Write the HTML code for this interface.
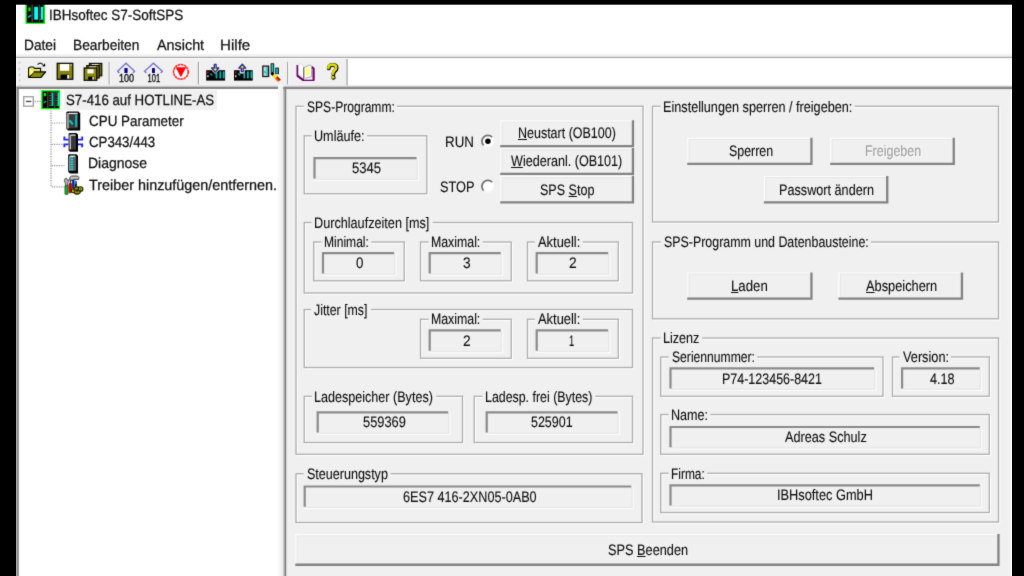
<!DOCTYPE html>
<html><head><meta charset="utf-8"><title>IBHsoftec S7-SoftSPS</title>
<style>
html,body{margin:0;padding:0;background:#000;}
body{width:1024px;height:576px;overflow:hidden;position:relative;font-family:"Liberation Sans",sans-serif;}
#clip{position:absolute;left:16px;top:0;width:996px;height:576px;overflow:hidden;}
#content{position:absolute;left:-16px;top:0;width:1024px;height:600px;filter:url(#soft);}
#win{position:absolute;left:0;top:0;width:1024px;height:600px;background:#fff;}
#topbar{position:absolute;left:0;top:0;width:1024px;height:4.7px;}
.a{position:absolute;}
.t{position:absolute;white-space:nowrap;line-height:20px;height:20px;text-rendering:geometricPrecision;transform-origin:0 0;color:#0c0c0c;-webkit-text-stroke:0.1px #0c0c0c;}
.t.ui{color:#101010;-webkit-text-stroke:0.25px #101010;}
.t.dis{color:#a2a2a2;-webkit-text-stroke:0.2px #a2a2a2;text-shadow:1.2px 1.2px 0 #fff;}
.t u{text-decoration:underline;text-underline-offset:1px;text-decoration-thickness:1px;}
svg{position:absolute;left:0;top:0;}
</style></head><body>
<svg width="0" height="0" style="position:absolute"><defs>
<filter id="soft" x="0" y="0" width="100%" height="100%" color-interpolation-filters="sRGB">
<feConvolveMatrix order="3" kernelMatrix="0.0121 0.0858 0.0121 0.0858 0.6084 0.0858 0.0121 0.0858 0.0121" divisor="1" edgeMode="duplicate" preserveAlpha="true"/>
</filter></defs></svg>
<div id="clip"><div id="content">
<div id="win"></div>
<!-- toolbar background -->
<div class="a" style="left:0px;top:58px;width:347px;height:29px;background:#f0f0f0"></div>
<!-- right pane background -->
<div class="a" style="left:278px;top:87px;width:746px;height:513px;background:#f0f0f0"></div>
<!-- tree selection -->
<div class="a" style="left:64px;top:90px;width:153px;height:20px;background:#f0f0f0"></div>
<svg width="1024" height="600" viewBox="0 0 1024 600">
<!-- menu separator -->
<rect x="0" y="54.2" width="1024" height="2.7" fill="#f1f1f1"/>
<rect x="0" y="56.8" width="1024" height="1.25" fill="#a8a8a8"/>
<rect x="0" y="58" width="347" height="1.3" fill="#fbfbfb"/>
<!-- toolbar right edge -->
<rect x="346.3" y="59" width="1.5" height="27.8" fill="#b2b2b2"/>
<!-- toolbar bottom highlight -->
<rect x="0" y="85" width="347" height="1.8" fill="#f8f8f8"/>
<!-- tree borders -->
<rect x="0" y="85.7" width="278" height="1.4" fill="#c6c6c6"/>
<rect x="0" y="87.0" width="278" height="2.0" fill="#868686"/>
<rect x="10" y="86.8" width="7.3" height="520" fill="#a8a8a8"/>
<rect x="17.2" y="86.8" width="1.55" height="520" fill="#7a7a7a"/>
<!-- right pane borders -->
<rect x="283.3" y="85.7" width="740" height="1.4" fill="#c6c6c6"/>
<rect x="283.3" y="87.1" width="1.2" height="520" fill="#b6b6b6"/>
<rect x="283.3" y="87.1" width="740" height="2.0" fill="#848484"/>
<rect x="284.4" y="87.1" width="1.9" height="520" fill="#848484"/>
<rect x="277.6" y="89" width="2.6" height="520" fill="#f8f8f8"/>
<rect x="1010.8" y="89" width="1.2" height="520" fill="#fff"/>
<rect x="297.20" y="107.45" width="347.00" height="348.00" fill="none" stroke="#fff" stroke-width="1.1"/>
<rect x="296.00" y="106.25" width="347.00" height="348.00" fill="none" stroke="#adadad" stroke-width="1.3"/>
<rect x="305.45" y="136.95" width="122.50" height="58.00" fill="none" stroke="#fff" stroke-width="1.1"/>
<rect x="304.25" y="135.75" width="122.50" height="58.00" fill="none" stroke="#adadad" stroke-width="1.3"/>
<rect x="305.45" y="223.70" width="328.25" height="70.50" fill="none" stroke="#fff" stroke-width="1.1"/>
<rect x="304.25" y="222.50" width="328.25" height="70.50" fill="none" stroke="#adadad" stroke-width="1.3"/>
<rect x="314.95" y="243.20" width="90.50" height="38.75" fill="none" stroke="#fff" stroke-width="1.1"/>
<rect x="313.75" y="242.00" width="90.50" height="38.75" fill="none" stroke="#adadad" stroke-width="1.3"/>
<rect x="421.70" y="243.20" width="90.75" height="38.75" fill="none" stroke="#fff" stroke-width="1.1"/>
<rect x="420.50" y="242.00" width="90.75" height="38.75" fill="none" stroke="#adadad" stroke-width="1.3"/>
<rect x="528.70" y="243.20" width="90.75" height="38.75" fill="none" stroke="#fff" stroke-width="1.1"/>
<rect x="527.50" y="242.00" width="90.75" height="38.75" fill="none" stroke="#adadad" stroke-width="1.3"/>
<rect x="305.45" y="310.70" width="328.25" height="58.00" fill="none" stroke="#fff" stroke-width="1.1"/>
<rect x="304.25" y="309.50" width="328.25" height="58.00" fill="none" stroke="#adadad" stroke-width="1.3"/>
<rect x="421.70" y="320.45" width="90.75" height="39.00" fill="none" stroke="#fff" stroke-width="1.1"/>
<rect x="420.50" y="319.25" width="90.75" height="39.00" fill="none" stroke="#adadad" stroke-width="1.3"/>
<rect x="528.70" y="320.45" width="90.75" height="39.00" fill="none" stroke="#fff" stroke-width="1.1"/>
<rect x="527.50" y="319.25" width="90.75" height="39.00" fill="none" stroke="#adadad" stroke-width="1.3"/>
<rect x="305.45" y="397.45" width="158.25" height="46.25" fill="none" stroke="#fff" stroke-width="1.1"/>
<rect x="304.25" y="396.25" width="158.25" height="46.25" fill="none" stroke="#adadad" stroke-width="1.3"/>
<rect x="475.45" y="397.45" width="158.25" height="46.25" fill="none" stroke="#fff" stroke-width="1.1"/>
<rect x="474.25" y="396.25" width="158.25" height="46.25" fill="none" stroke="#adadad" stroke-width="1.3"/>
<rect x="297.20" y="474.95" width="346.00" height="48.75" fill="none" stroke="#fff" stroke-width="1.1"/>
<rect x="296.00" y="473.75" width="346.00" height="48.75" fill="none" stroke="#adadad" stroke-width="1.3"/>
<rect x="653.70" y="107.45" width="346.00" height="115.75" fill="none" stroke="#fff" stroke-width="1.1"/>
<rect x="652.50" y="106.25" width="346.00" height="115.75" fill="none" stroke="#adadad" stroke-width="1.3"/>
<rect x="653.70" y="243.20" width="346.00" height="76.75" fill="none" stroke="#fff" stroke-width="1.1"/>
<rect x="652.50" y="242.00" width="346.00" height="76.75" fill="none" stroke="#adadad" stroke-width="1.3"/>
<rect x="653.70" y="339.20" width="346.00" height="184.00" fill="none" stroke="#fff" stroke-width="1.1"/>
<rect x="652.50" y="338.00" width="346.00" height="184.00" fill="none" stroke="#adadad" stroke-width="1.3"/>
<rect x="661.95" y="358.20" width="222.25" height="39.25" fill="none" stroke="#fff" stroke-width="1.1"/>
<rect x="660.75" y="357.00" width="222.25" height="39.25" fill="none" stroke="#adadad" stroke-width="1.3"/>
<rect x="893.70" y="358.20" width="96.75" height="39.25" fill="none" stroke="#fff" stroke-width="1.1"/>
<rect x="892.50" y="357.00" width="96.75" height="39.25" fill="none" stroke="#adadad" stroke-width="1.3"/>
<rect x="661.95" y="415.70" width="328.50" height="39.75" fill="none" stroke="#fff" stroke-width="1.1"/>
<rect x="660.75" y="414.50" width="328.50" height="39.75" fill="none" stroke="#adadad" stroke-width="1.3"/>
<rect x="661.95" y="474.45" width="328.50" height="39.25" fill="none" stroke="#fff" stroke-width="1.1"/>
<rect x="660.75" y="473.25" width="328.50" height="39.25" fill="none" stroke="#adadad" stroke-width="1.3"/>
<rect x="303.55" y="104.00" width="93.45" height="8" fill="#f0f0f0"/>
<rect x="311.70" y="133.00" width="55.30" height="8" fill="#f0f0f0"/>
<rect x="311.70" y="220.00" width="120.95" height="8" fill="#f0f0f0"/>
<rect x="321.70" y="239.00" width="49.70" height="8" fill="#f0f0f0"/>
<rect x="428.55" y="239.00" width="54.10" height="8" fill="#f0f0f0"/>
<rect x="534.80" y="239.00" width="47.85" height="8" fill="#f0f0f0"/>
<rect x="311.05" y="307.00" width="59.85" height="8" fill="#f0f0f0"/>
<rect x="428.55" y="316.00" width="54.10" height="8" fill="#f0f0f0"/>
<rect x="534.80" y="316.00" width="47.85" height="8" fill="#f0f0f0"/>
<rect x="311.80" y="394.00" width="124.60" height="8" fill="#f0f0f0"/>
<rect x="482.30" y="394.00" width="113.10" height="8" fill="#f0f0f0"/>
<rect x="303.55" y="471.00" width="87.10" height="8" fill="#f0f0f0"/>
<rect x="660.55" y="104.00" width="194.10" height="8" fill="#f0f0f0"/>
<rect x="660.55" y="239.00" width="210.35" height="8" fill="#f0f0f0"/>
<rect x="660.55" y="335.00" width="41.60" height="8" fill="#f0f0f0"/>
<rect x="668.55" y="354.00" width="88.60" height="8" fill="#f0f0f0"/>
<rect x="899.30" y="354.00" width="51.60" height="8" fill="#f0f0f0"/>
<rect x="668.55" y="412.00" width="41.85" height="8" fill="#f0f0f0"/>
<rect x="668.55" y="471.00" width="38.60" height="8" fill="#f0f0f0"/>
<path d="M313.40 180.40H418.40V157.10" fill="none" stroke="#fbfbfb" stroke-width="1.2"/>
<path d="M314.60 179.10H417.10V158.30" fill="none" stroke="#e7e7e7" stroke-width="1.3"/>
<path d="M314.50 178.50V158.20H416.50" fill="none" stroke="#8a8a8a" stroke-width="2.2"/>
<path d="M321.90 275.40H396.00V252.10" fill="none" stroke="#fbfbfb" stroke-width="1.2"/>
<path d="M323.10 274.10H394.70V253.30" fill="none" stroke="#e7e7e7" stroke-width="1.3"/>
<path d="M323.00 273.50V253.20H394.10" fill="none" stroke="#8a8a8a" stroke-width="2.2"/>
<path d="M428.60 275.40H502.60V252.10" fill="none" stroke="#fbfbfb" stroke-width="1.2"/>
<path d="M429.80 274.10H501.30V253.30" fill="none" stroke="#e7e7e7" stroke-width="1.3"/>
<path d="M429.70 273.50V253.20H500.70" fill="none" stroke="#8a8a8a" stroke-width="2.2"/>
<path d="M535.60 275.40H610.00V252.10" fill="none" stroke="#fbfbfb" stroke-width="1.2"/>
<path d="M536.80 274.10H608.70V253.30" fill="none" stroke="#e7e7e7" stroke-width="1.3"/>
<path d="M536.70 273.50V253.20H608.10" fill="none" stroke="#8a8a8a" stroke-width="2.2"/>
<path d="M428.60 352.60H502.60V329.30" fill="none" stroke="#fbfbfb" stroke-width="1.2"/>
<path d="M429.80 351.30H501.30V330.50" fill="none" stroke="#e7e7e7" stroke-width="1.3"/>
<path d="M429.70 350.70V330.40H500.70" fill="none" stroke="#8a8a8a" stroke-width="2.2"/>
<path d="M535.60 352.60H610.00V329.30" fill="none" stroke="#fbfbfb" stroke-width="1.2"/>
<path d="M536.80 351.30H608.70V330.50" fill="none" stroke="#e7e7e7" stroke-width="1.3"/>
<path d="M536.70 350.70V330.40H608.10" fill="none" stroke="#8a8a8a" stroke-width="2.2"/>
<path d="M316.60 434.50H450.00V411.20" fill="none" stroke="#fbfbfb" stroke-width="1.2"/>
<path d="M317.80 433.20H448.70V412.40" fill="none" stroke="#e7e7e7" stroke-width="1.3"/>
<path d="M317.70 432.60V412.30H448.10" fill="none" stroke="#8a8a8a" stroke-width="2.2"/>
<path d="M485.60 434.50H619.40V411.20" fill="none" stroke="#fbfbfb" stroke-width="1.2"/>
<path d="M486.80 433.20H618.10V412.40" fill="none" stroke="#e7e7e7" stroke-width="1.3"/>
<path d="M486.70 432.60V412.30H617.50" fill="none" stroke="#8a8a8a" stroke-width="2.2"/>
<path d="M303.60 508.70H633.20V485.40" fill="none" stroke="#fbfbfb" stroke-width="1.2"/>
<path d="M304.80 507.40H631.90V486.60" fill="none" stroke="#e7e7e7" stroke-width="1.3"/>
<path d="M304.70 506.80V486.50H631.30" fill="none" stroke="#8a8a8a" stroke-width="2.2"/>
<path d="M669.40 390.50H876.00V367.20" fill="none" stroke="#fbfbfb" stroke-width="1.2"/>
<path d="M670.60 389.20H874.70V368.40" fill="none" stroke="#e7e7e7" stroke-width="1.3"/>
<path d="M670.50 388.60V368.30H874.10" fill="none" stroke="#8a8a8a" stroke-width="2.2"/>
<path d="M901.00 390.50H981.70V367.20" fill="none" stroke="#fbfbfb" stroke-width="1.2"/>
<path d="M902.20 389.20H980.40V368.40" fill="none" stroke="#e7e7e7" stroke-width="1.3"/>
<path d="M902.10 388.60V368.30H979.80" fill="none" stroke="#8a8a8a" stroke-width="2.2"/>
<path d="M669.40 449.20H981.70V425.90" fill="none" stroke="#fbfbfb" stroke-width="1.2"/>
<path d="M670.60 447.90H980.40V427.10" fill="none" stroke="#e7e7e7" stroke-width="1.3"/>
<path d="M670.50 447.30V427.00H979.80" fill="none" stroke="#8a8a8a" stroke-width="2.2"/>
<path d="M669.40 507.50H981.70V484.20" fill="none" stroke="#fbfbfb" stroke-width="1.2"/>
<path d="M670.60 506.20H980.40V485.40" fill="none" stroke="#e7e7e7" stroke-width="1.3"/>
<path d="M670.50 505.60V485.30H979.80" fill="none" stroke="#8a8a8a" stroke-width="2.2"/>
<rect x="500.20" y="120.20" width="133.90" height="27.10" fill="#f0f0f0"/>
<path d="M502.00 145.00V122.00H631.80" fill="none" stroke="#e7e7e7" stroke-width="1.2"/>
<path d="M500.80 146.10V120.80H632.90" fill="none" stroke="#fcfcfc" stroke-width="1.2"/>
<path d="M500.20 146.15H632.95V120.20" fill="none" stroke="#828282" stroke-width="2.3"/>
<rect x="500.20" y="148.00" width="133.90" height="27.10" fill="#f0f0f0"/>
<path d="M502.00 172.80V149.80H631.80" fill="none" stroke="#e7e7e7" stroke-width="1.2"/>
<path d="M500.80 173.90V148.60H632.90" fill="none" stroke="#fcfcfc" stroke-width="1.2"/>
<path d="M500.20 173.95H632.95V148.00" fill="none" stroke="#828282" stroke-width="2.3"/>
<rect x="500.20" y="175.80" width="133.90" height="27.70" fill="#f0f0f0"/>
<path d="M502.00 201.20V177.60H631.80" fill="none" stroke="#e7e7e7" stroke-width="1.2"/>
<path d="M500.80 202.30V176.40H632.90" fill="none" stroke="#fcfcfc" stroke-width="1.2"/>
<path d="M500.20 202.35H632.95V175.80" fill="none" stroke="#828282" stroke-width="2.3"/>
<rect x="687.20" y="137.70" width="125.40" height="27.40" fill="#f0f0f0"/>
<path d="M689.00 162.80V139.50H810.30" fill="none" stroke="#e7e7e7" stroke-width="1.2"/>
<path d="M687.80 163.90V138.30H811.40" fill="none" stroke="#fcfcfc" stroke-width="1.2"/>
<path d="M687.20 163.95H811.45V137.70" fill="none" stroke="#828282" stroke-width="2.3"/>
<rect x="830.20" y="137.70" width="124.70" height="27.40" fill="#f0f0f0"/>
<path d="M832.00 162.80V139.50H952.60" fill="none" stroke="#e7e7e7" stroke-width="1.2"/>
<path d="M830.80 163.90V138.30H953.70" fill="none" stroke="#fcfcfc" stroke-width="1.2"/>
<path d="M830.20 163.95H953.75V137.70" fill="none" stroke="#828282" stroke-width="2.3"/>
<rect x="763.90" y="175.90" width="124.50" height="27.60" fill="#f0f0f0"/>
<path d="M765.70 201.20V177.70H886.10" fill="none" stroke="#e7e7e7" stroke-width="1.2"/>
<path d="M764.50 202.30V176.50H887.20" fill="none" stroke="#fcfcfc" stroke-width="1.2"/>
<path d="M763.90 202.35H887.25V175.90" fill="none" stroke="#828282" stroke-width="2.3"/>
<rect x="687.20" y="272.40" width="125.40" height="27.30" fill="#f0f0f0"/>
<path d="M689.00 297.40V274.20H810.30" fill="none" stroke="#e7e7e7" stroke-width="1.2"/>
<path d="M687.80 298.50V273.00H811.40" fill="none" stroke="#fcfcfc" stroke-width="1.2"/>
<path d="M687.20 298.55H811.45V272.40" fill="none" stroke="#828282" stroke-width="2.3"/>
<rect x="838.40" y="272.40" width="124.70" height="27.30" fill="#f0f0f0"/>
<path d="M840.20 297.40V274.20H960.80" fill="none" stroke="#e7e7e7" stroke-width="1.2"/>
<path d="M839.00 298.50V273.00H961.90" fill="none" stroke="#fcfcfc" stroke-width="1.2"/>
<path d="M838.40 298.55H961.95V272.40" fill="none" stroke="#828282" stroke-width="2.3"/>
<rect x="295.30" y="534.10" width="704.30" height="31.80" fill="#f0f0f0"/>
<path d="M297.10 563.60V535.90H997.30" fill="none" stroke="#e7e7e7" stroke-width="1.2"/>
<path d="M295.90 564.70V534.70H998.40" fill="none" stroke="#fcfcfc" stroke-width="1.2"/>
<path d="M295.30 564.75H998.45V534.10" fill="none" stroke="#828282" stroke-width="2.3"/>
<circle cx="487.9" cy="141.3" r="5.2" fill="#fff"/>
<path d="M492.10 137.10A5.9 5.9 0 0 0 483.70 145.50" fill="none" stroke="#6e6e6e" stroke-width="1.7"/>
<path d="M492.10 137.10A5.9 5.9 0 0 1 483.70 145.50" fill="none" stroke="#f8f8f8" stroke-width="1.2"/>
<circle cx="487.9" cy="141.3" r="2.75" fill="#000"/>
<circle cx="487.9" cy="186.4" r="5.2" fill="#fff"/>
<path d="M492.10 182.20A5.9 5.9 0 0 0 483.70 190.60" fill="none" stroke="#6e6e6e" stroke-width="1.7"/>
<path d="M492.10 182.20A5.9 5.9 0 0 1 483.70 190.60" fill="none" stroke="#f8f8f8" stroke-width="1.2"/>
<!-- ===== app icon (title bar) ===== -->
<g>
<rect x="25.4" y="3" width="19.7" height="20.8" fill="#00f000"/>
<rect x="26.9" y="4" width="16.6" height="18.6" fill="#000"/>
<rect x="28.3" y="7.4" width="2.3" height="3.8" fill="#00f000"/>
<path d="M28.2 17.4L31.2 15.2" stroke="#00c8c8" stroke-width="1.5" fill="none"/>
<rect x="31.3" y="4" width="1.9" height="18.6" fill="#3c3c3c"/>
<rect x="34.2" y="6.8" width="3.8" height="12.9" fill="#00ffff"/>
<rect x="38.6" y="4" width="1.6" height="18.6" fill="#3c3c3c"/>
<rect x="40.8" y="6.8" width="2.3" height="12.9" fill="#00ffff"/>
<rect x="32.2" y="14.2" width="1" height="1" fill="#208020"/><rect x="32.2" y="19" width="1" height="1" fill="#a02020"/>
<rect x="40" y="14.2" width="0.9" height="1" fill="#208020"/><rect x="40" y="16.4" width="0.9" height="1" fill="#a02020"/><rect x="40" y="19" width="0.9" height="1" fill="#20a020"/>
</g>
<!-- ===== toolbar gripper ===== -->
<g stroke="#c4c4c4" stroke-width="1.1" fill="none">
<path d="M18.8 63.6L20.4 61.8M18.8 69.8L20.4 68M18.8 75.6L20.4 73.8M18.8 81.5L20.4 79.7M18.8 87L20.4 85.2"/>
</g>
<!-- ===== open folder ===== -->
<g>
<path d="M28.6 77.6V68L30.4 67H33.4L34.6 68.4H40.6V72" fill="#e8e870" stroke="#000" stroke-width="1.1"/>
<path d="M28.8 77.5L34 71.9H45.6L40.8 77.5Z" fill="#8a8a10" stroke="#000" stroke-width="1.2" stroke-linejoin="round"/>
<path d="M29.6 76L29.6 68.6L34 71.9Z" fill="#ffff80"/>
<path d="M37.6 64.6Q40 61.6 43 64.6" fill="none" stroke="#202020" stroke-width="1.1"/>
<path d="M42 66.2L45.2 66.6L45 63.2Z" fill="#000"/>
</g>
<!-- ===== save ===== -->
<g>
<rect x="57.2" y="63.3" width="15.6" height="16" fill="#848410" stroke="#000" stroke-width="1.2"/>
<rect x="60" y="64" width="9.2" height="6.8" fill="#fff"/>
<rect x="60.6" y="74.6" width="9.2" height="4.2" fill="#000"/>
<rect x="67.2" y="75" width="2.2" height="3.6" fill="#fff"/>
<rect x="70.6" y="64.2" width="1.2" height="1.6" fill="#d0d0d0"/>
</g>
<!-- ===== save all ===== -->
<g>
<rect x="89.4" y="63.4" width="12.4" height="12.4" fill="#6c6c10" stroke="#000" stroke-width="1.1"/>
<rect x="92" y="64" width="6.4" height="3" fill="#e8e8e8"/>
<rect x="86.8" y="65.6" width="12.4" height="12.4" fill="#78780c" stroke="#000" stroke-width="1.1"/>
<rect x="89.4" y="66.4" width="6.6" height="3" fill="#e8e8e8"/>
<rect x="84.2" y="68" width="12.6" height="12.3" fill="#8a8a10" stroke="#000" stroke-width="1.2"/>
<rect x="87.4" y="69.2" width="6.2" height="4.2" fill="#fff"/>
<rect x="88.2" y="76.6" width="6" height="3.2" fill="#000"/>
<rect x="92.4" y="77" width="1.4" height="2.6" fill="#fff"/>
</g>
<!-- separators -->
<g>
<rect x="108.6" y="62" width="1.2" height="22.4" fill="#a4a4a4"/><rect x="109.8" y="62" width="1.1" height="22.4" fill="#fafafa"/>
<rect x="197.8" y="62" width="1.2" height="22.4" fill="#a4a4a4"/><rect x="199" y="62" width="1.1" height="22.4" fill="#fafafa"/>
<rect x="287" y="62" width="1.2" height="22.4" fill="#a4a4a4"/><rect x="288.2" y="62" width="1.1" height="22.4" fill="#fafafa"/>
</g>
<!-- ===== OB100 ===== -->
<g>
<path d="M119.4 73L117.6 71.2L126 63.2L134.6 71.2L132.8 73" fill="none" stroke="#7272c8" stroke-width="1.3"/>
<rect x="124.4" y="68" width="3.2" height="5" rx="0.6" fill="#000090"/>
<text x="119" y="81.9" font-family="Liberation Sans, sans-serif" font-size="10.2" fill="#101010" stroke="#101010" stroke-width="0.35" textLength="15" lengthAdjust="spacingAndGlyphs">100</text>
</g>
<!-- ===== OB101 ===== -->
<g>
<path d="M146.4 73L144.6 71.2L153.4 63.2L162.4 71.2L160.6 73" fill="none" stroke="#7272c8" stroke-width="1.3"/>
<rect x="152" y="68" width="2.9" height="5" rx="0.6" fill="#000090"/>
<text x="147.6" y="81.9" font-family="Liberation Sans, sans-serif" font-size="10.2" fill="#101010" stroke="#101010" stroke-width="0.35" textLength="12.6" lengthAdjust="spacingAndGlyphs">101</text>
</g>
<!-- ===== stop ===== -->
<g>
<circle cx="180.9" cy="71.8" r="7.3" fill="#fff" stroke="#ff2020" stroke-width="1.6" stroke-dasharray="2.6 0.5"/>
<path d="M175.6 67.2H186.2L180.9 77.2Z" fill="#ff0000"/>
</g>
<!-- ===== download ===== -->
<g>
<rect x="206.2" y="70.2" width="18.9" height="10.4" fill="#000"/>
<path d="M211.4 70.2L215.2 74L219 70.2Z" fill="#e0e0e0"/>
<rect x="215.6" y="72.6" width="1.8" height="5.8" fill="#00b8b8"/>
<rect x="219.4" y="71.4" width="1.8" height="7" fill="#00b8b8"/>
<rect x="222.8" y="71.4" width="1.8" height="7" fill="#00b8b8"/>
<rect x="207.2" y="71.4" width="1.5" height="2.2" fill="#e00000"/>
<rect x="207.2" y="75.2" width="1.5" height="2" fill="#d0d0d0"/>
<path d="M210.2 73.6L212.4 75.6" stroke="#00b8b8" stroke-width="1.3"/>
<path d="M214.3 64.4H216.1V68H218.8L215.2 72.2L211.6 68H214.3Z" fill="#f4f400" stroke="#2828a8" stroke-width="1.3" stroke-linejoin="round"/>
</g>
<!-- ===== upload ===== -->
<g>
<rect x="234" y="70.2" width="18.7" height="10.4" fill="#000"/>
<rect x="239.6" y="70.2" width="5.2" height="3.4" fill="#e8e8e8"/>
<rect x="243.4" y="72.8" width="1.8" height="5.6" fill="#00b8b8"/>
<rect x="247" y="71.4" width="1.8" height="7" fill="#00b8b8"/>
<rect x="250.5" y="71.4" width="1.8" height="7" fill="#00b8b8"/>
<rect x="235" y="71.4" width="1.5" height="2.2" fill="#e00000"/>
<rect x="235" y="75.2" width="1.5" height="2" fill="#d0d0d0"/>
<path d="M238 73.6L240.2 75.6" stroke="#00b8b8" stroke-width="1.3"/>
<path d="M242.3 64.2L245.8 68.2H243.2V71.6H241.4V68.2H238.8Z" fill="#f4f400" stroke="#2828a8" stroke-width="1.3" stroke-linejoin="round"/>
</g>
<!-- ===== erase ===== -->
<g>
<rect x="262.8" y="66.1" width="5.8" height="10.4" fill="#d4d4d4" stroke="#181818" stroke-width="1.3"/>
<rect x="266.4" y="67" width="1.4" height="8.8" fill="#00c0c0"/>
<path d="M263.8 71L265.8 73" stroke="#00c0c0" stroke-width="1.3"/>
<rect x="270.6" y="63.2" width="3.6" height="9.6" fill="#282828"/>
<rect x="271.7" y="64.2" width="1.4" height="8" fill="#00d8d8"/>
<rect x="275.2" y="67.6" width="3.8" height="6.6" fill="#282828"/>
<rect x="276.4" y="68.6" width="1.4" height="5" fill="#00d8d8"/>
<path d="M271.4 72.8L273.8 75.2" stroke="#000" stroke-width="3"/>
<path d="M273.4 74.8L276.8 78.2" stroke="#f4e428" stroke-width="3.6"/>
<path d="M276.2 77.6L279.4 80.8" stroke="#f06000" stroke-width="3.6"/>
<path d="M277 77L280.2 80.2" stroke="#a00000" stroke-width="1.3"/>
</g>
<!-- ===== book ===== -->
<g>
<path d="M297.6 65V75.8L303 80H313.6V68.6L311.4 66.8" fill="none" stroke="#700070" stroke-width="2.2" stroke-linejoin="round"/>
<path d="M298.4 64.4L301.4 63.6L304 67.6V78.4L298.4 74.6Z" fill="#fff" stroke="#c8c8c8" stroke-width="0.6"/>
<path d="M304 67.6L309.6 65L311.6 66.2V76.4L304 78.8Z" fill="#fff" stroke="#909090" stroke-width="0.8"/>
<path d="M303.6 67.6V79" stroke="#707070" stroke-width="1.1"/>
<path d="M305.6 68.4L309.8 66.6V74.6L305.6 76.4Z" fill="#ffff80"/>
<path d="M304 79.2H312.6" stroke="#f8f8f8" stroke-width="1"/>
</g>
<!-- ===== help ===== -->
<g>
<path d="M328.8 68.4Q328.6 65 332.6 65Q336.6 65 336.6 68Q336.6 69.8 334.6 71.2Q333.4 72.2 333.4 74.2" fill="none" stroke="#000" stroke-width="3.9" stroke-linecap="round"/>
<circle cx="333.4" cy="77.6" r="2.2" fill="#000"/>
<path d="M328.4 68Q328.2 64.6 332.2 64.6Q336.2 64.6 336.2 67.6Q336.2 69.4 334.2 70.8Q333 71.8 333 73.8" fill="none" stroke="#dcdc00" stroke-width="2.6" stroke-linecap="round"/>
<circle cx="333" cy="77.2" r="1.5" fill="#dcdc00"/>
</g>
<!-- ===== tree: expand box, dotted lines ===== -->
<g>
<rect x="23.7" y="96.7" width="9.6" height="9.5" fill="#fff" stroke="#9c9c9c" stroke-width="1.3"/>
<rect x="25.9" y="100.8" width="5.4" height="1.3" fill="#404040"/>
<g stroke="#8e8e8e" stroke-width="1.2" stroke-dasharray="1.2 1.2" fill="none">
<path d="M34.6 101.4H41.2"/>
<path d="M51 110.4V186.8"/>
<path d="M51.6 123H64.4M51.6 144.4H63.4M51.6 165.6H64.4M51.6 186.8H64.4"/>
</g>
</g>
<!-- ===== tree root icon ===== -->
<g>
<rect x="41.2" y="90.2" width="18.9" height="19.1" fill="#00f000"/>
<rect x="42.6" y="91.5" width="16.2" height="16.5" fill="#000"/>
<rect x="43.8" y="93" width="2.3" height="3.2" fill="#00f000"/>
<path d="M43.8 103L46.2 101" stroke="#00b8b8" stroke-width="1.4"/>
<rect x="47.1" y="91.5" width="1.3" height="16.5" fill="#484848"/>
<g fill="#c00000"><rect x="48.9" y="92.6" width="2.1" height="1.5"/><rect x="48.9" y="97.4" width="2.1" height="1.5"/><rect x="48.9" y="102.1" width="2.1" height="1.5"/></g>
<g fill="#00a000"><rect x="48.9" y="95" width="2.1" height="1.3"/><rect x="48.9" y="99.8" width="2.1" height="1.3"/><rect x="48.9" y="104.6" width="2.1" height="1.3"/></g>
<rect x="51.5" y="92.4" width="1.9" height="13.6" fill="#00d8d8"/>
<rect x="54.2" y="91.5" width="1.2" height="16.5" fill="#484848"/>
<g fill="#c00000"><rect x="55.6" y="94.6" width="1.7" height="1.5"/><rect x="55.6" y="97.4" width="1.7" height="1.5"/><rect x="55.6" y="102.1" width="1.7" height="1.5"/></g>
<g fill="#00a000"><rect x="55.6" y="92.4" width="1.7" height="1.2"/><rect x="55.6" y="99.8" width="1.7" height="1.3"/><rect x="55.6" y="104.6" width="1.7" height="1.3"/></g>
<rect x="57.5" y="92.4" width="1.5" height="13.6" fill="#00e8e8"/>
</g>
<!-- ===== CPU icon ===== -->
<g>
<path d="M66.4 112L67.6 111.6H78.4L80.2 113.4V130.4H68L66.4 128.8Z" fill="#000"/>
<rect x="67.4" y="113" width="10.6" height="15.4" fill="#3a3a3a"/>
<rect x="67.2" y="113" width="1.6" height="15.6" fill="#b4b4b4"/>
<rect x="68.8" y="112.8" width="8.8" height="1.3" fill="#f0f0f0"/>
<path d="M69.6 120.4L72.8 124.4" stroke="#00d0d0" stroke-width="2"/>
<rect x="75.2" y="114.9" width="1.9" height="11.9" fill="#00c8c8"/>
</g>
<!-- ===== CP icon ===== -->
<g>
<path d="M68.6 133.6L69.8 133H76.4L78 134.6V151.8H70L68.6 150.4Z" fill="#000"/>
<rect x="69.6" y="134.6" width="6.4" height="15" fill="#383838"/>
<rect x="69.5" y="134.6" width="1.5" height="14.8" fill="#c0c0c0"/>
<rect x="71" y="134.4" width="4.4" height="1.4" fill="#d8d8d8"/>
<g stroke="#2020ff" stroke-width="1.9" fill="none">
<path d="M64.4 136.6V139.6H68.6M64.4 147.2V144.4H68.6M82.2 136.6V139.6H78M82.2 147.2V144.4H78"/>
</g>
</g>
<!-- ===== Diagnose icon ===== -->
<g>
<path d="M68.2 154.8L69.4 154.2H76.4L78 155.8V173.4H70L68.2 171.8Z" fill="#000"/>
<rect x="69.4" y="155.8" width="6.8" height="15" fill="#484848"/>
<rect x="69.2" y="155.8" width="1.1" height="15" fill="#a0a0a0"/>
<rect x="70.3" y="156.2" width="3.2" height="14.2" fill="#30d0d8"/>
<rect x="70.3" y="155.6" width="5" height="1.2" fill="#e8ffff"/>
<path d="M70.3 158.4H76M70.3 160.8H76M70.3 163.2H76M70.3 165.6H76M70.3 168H76" stroke="#303838" stroke-width="0.6" fill="none"/>
<rect x="73.5" y="156.8" width="2.4" height="13.6" fill="#707070" opacity="0.6"/>
</g>
<!-- ===== Treiber icon ===== -->
<g>
<path d="M69.8 177.6L71.4 176H77.6L78.8 177.4V179.4H73.4L72.8 180.2H69.8Z" fill="#c0c0c0" stroke="#404040" stroke-width="1"/>
<path d="M64.4 180.8Q64.2 178.4 66.4 178L67.6 180.4L68.6 179.6Q69.2 182 67.6 183V186H65.4V183Q64.4 182.4 64.4 180.8Z" fill="#b0b0b0" stroke="#505050" stroke-width="0.9"/>
<rect x="64.9" y="185.6" width="3.2" height="9" rx="0.8" fill="#18a828" stroke="#0a400a" stroke-width="0.6"/>
<rect x="68.9" y="183.4" width="2.8" height="9.4" rx="0.6" fill="#e00000" stroke="#500000" stroke-width="0.6"/>
<rect x="69.8" y="179.8" width="1.4" height="4" fill="#404040"/>
<rect x="72.2" y="179.8" width="1.7" height="8.4" fill="#000090"/>
<rect x="73.9" y="180.2" width="1.6" height="6.4" fill="#00a0e8"/>
<rect x="75.5" y="181" width="1.2" height="6" fill="#202020"/>
<circle cx="77" cy="190.4" r="3.6" fill="#d4d400" stroke="#181800" stroke-width="1.3"/>
<circle cx="80.6" cy="189" r="2.3" fill="#d4d400" stroke="#181800" stroke-width="1.1"/>
<circle cx="73.2" cy="190.8" r="1.9" fill="#cccc00" stroke="#181800" stroke-width="1.1"/>
<circle cx="77" cy="190.4" r="1.2" fill="#202000"/>
<circle cx="80.6" cy="189" r="0.8" fill="#202000"/>
<path d="M75 186.4L76.4 183.8" stroke="#000" stroke-width="1.3"/>
<path d="M74.6 188.2L79.4 192.8M79.4 188L74.8 192.8M77 186.6V194.4M73 190.4H81" stroke="#282800" stroke-width="0.6" fill="none"/>
</g>

</svg>
<div class="t ui" style="left:49.09px;top:6.00px;font-size:14.8px;transform:scaleX(0.9123)">IBHsoftec S7-SoftSPS</div>
<div class="t ui" style="left:24.27px;top:36.00px;font-size:14.8px;transform:scaleX(0.9262)">Datei</div>
<div class="t ui" style="left:72.82px;top:36.00px;font-size:14.8px;transform:scaleX(0.9276)">Bearbeiten</div>
<div class="t ui" style="left:156.75px;top:36.00px;font-size:14.8px;transform:scaleX(0.9708)">Ansicht</div>
<div class="t ui" style="left:219.98px;top:36.00px;font-size:14.8px;transform:scaleX(1.0221)">Hilfe</div>
<div class="t ui" style="left:66.25px;top:91.00px;font-size:14.8px;transform:scaleX(0.8961)">S7-416 auf HOTLINE-AS</div>
<div class="t ui" style="left:89.00px;top:112.00px;font-size:14.8px;transform:scaleX(0.9067)">CPU Parameter</div>
<div class="t ui" style="left:89.00px;top:133.00px;font-size:14.8px;transform:scaleX(0.8942)">CP343/443</div>
<div class="t ui" style="left:88.05px;top:154.00px;font-size:14.8px;transform:scaleX(0.9463)">Diagnose</div>
<div class="t ui" style="left:89.25px;top:176.00px;font-size:14.8px;transform:scaleX(0.9716)">Treiber hinzufügen/entfernen.</div>
<div class="t" style="left:306.75px;top:98.00px;font-size:15.2px;transform:scaleX(0.7943)">SPS-Programm:</div>
<div class="t" style="left:314.07px;top:127.00px;font-size:15.2px;transform:scaleX(0.8317)">Umläufe:</div>
<div class="t" style="left:351.75px;top:159.00px;font-size:15.2px;transform:scaleX(0.8623)">5345</div>
<div class="t" style="left:445.12px;top:133.00px;font-size:15.2px;transform:scaleX(0.8792)">RUN</div>
<div class="t" style="left:439.75px;top:178.00px;font-size:15.2px;transform:scaleX(0.8389)">STOP</div>
<div class="t" style="left:517.68px;top:124.00px;font-size:15.2px;transform:scaleX(0.8223)"><u>N</u>eustart (OB100)</div>
<div class="t" style="left:511.25px;top:152.00px;font-size:15.2px;transform:scaleX(0.8293)"><u>W</u>iederanl. (OB101)</div>
<div class="t" style="left:539.80px;top:181.00px;font-size:15.2px;transform:scaleX(0.8249)">SPS <u>S</u>top</div>
<div class="t" style="left:314.07px;top:214.00px;font-size:15.2px;transform:scaleX(0.8334)">Durchlaufzeiten [ms]</div>
<div class="t" style="left:324.11px;top:233.00px;font-size:15.2px;transform:scaleX(0.7935)">Minimal:</div>
<div class="t" style="left:355.50px;top:254.00px;font-size:15.2px;transform:scaleX(0.8750)">0</div>
<div class="t" style="left:430.94px;top:233.00px;font-size:15.2px;transform:scaleX(0.8114)">Maximal:</div>
<div class="t" style="left:462.50px;top:254.00px;font-size:15.2px;transform:scaleX(0.9062)">3</div>
<div class="t" style="left:538.00px;top:233.00px;font-size:15.2px;transform:scaleX(0.8490)">Aktuell:</div>
<div class="t" style="left:569.25px;top:254.00px;font-size:15.2px;transform:scaleX(0.9062)">2</div>
<div class="t" style="left:314.25px;top:301.00px;font-size:15.2px;transform:scaleX(0.8118)">Jitter [ms]</div>
<div class="t" style="left:430.94px;top:310.00px;font-size:15.2px;transform:scaleX(0.8114)">Maximal:</div>
<div class="t" style="left:462.50px;top:332.00px;font-size:15.2px;transform:scaleX(0.9062)">2</div>
<div class="t" style="left:538.00px;top:310.00px;font-size:15.2px;transform:scaleX(0.8490)">Aktuell:</div>
<div class="t" style="left:569.09px;top:332.00px;font-size:15.2px;transform:scaleX(0.6143)">1</div>
<div class="t" style="left:314.17px;top:388.00px;font-size:15.2px;transform:scaleX(0.8283)">Ladespeicher (Bytes)</div>
<div class="t" style="left:362.50px;top:413.00px;font-size:15.2px;transform:scaleX(0.8461)">559369</div>
<div class="t" style="left:484.68px;top:388.00px;font-size:15.2px;transform:scaleX(0.8153)">Ladesp. frei (Bytes)</div>
<div class="t" style="left:531.25px;top:413.00px;font-size:15.2px;transform:scaleX(0.8212)">525901</div>
<div class="t" style="left:306.75px;top:465.00px;font-size:15.2px;transform:scaleX(0.8257)">Steuerungstyp</div>
<div class="t" style="left:403.00px;top:488.00px;font-size:15.2px;transform:scaleX(0.8330)">6ES7 416-2XN05-0AB0</div>
<div class="t" style="left:608.40px;top:541.00px;font-size:15.2px;transform:scaleX(0.8392)">SPS <u>B</u>eenden</div>
<div class="t" style="left:662.92px;top:98.00px;font-size:15.2px;transform:scaleX(0.8337)">Einstellungen sperren / freigeben:</div>
<div class="t" style="left:728.75px;top:142.00px;font-size:15.2px;transform:scaleX(0.8165)">Sperren</div>
<div class="t dis" style="left:864.68px;top:142.00px;font-size:15.2px;transform:scaleX(0.8216)">Freigeben</div>
<div class="t" style="left:779.17px;top:181.00px;font-size:15.2px;transform:scaleX(0.8332)">Passwort ändern</div>
<div class="t" style="left:663.75px;top:233.00px;font-size:15.2px;transform:scaleX(0.8166)">SPS-Programm und Datenbausteine:</div>
<div class="t" style="left:731.13px;top:277.00px;font-size:15.2px;transform:scaleX(0.8704)"><u>L</u>aden</div>
<div class="t" style="left:866.00px;top:277.00px;font-size:15.2px;transform:scaleX(0.8424)"><u>A</u>bspeichern</div>
<div class="t" style="left:662.92px;top:329.00px;font-size:15.2px;transform:scaleX(0.8273)">Lizenz</div>
<div class="t" style="left:671.75px;top:348.00px;font-size:15.2px;transform:scaleX(0.7992)">Seriennummer:</div>
<div class="t" style="left:722.18px;top:370.00px;font-size:15.2px;transform:scaleX(0.8218)">P74-123456-8421</div>
<div class="t" style="left:902.50px;top:348.00px;font-size:15.2px;transform:scaleX(0.8387)">Version:</div>
<div class="t" style="left:930.00px;top:370.00px;font-size:15.2px;transform:scaleX(0.8330)">4.18</div>
<div class="t" style="left:670.92px;top:406.00px;font-size:15.2px;transform:scaleX(0.8292)">Name:</div>
<div class="t" style="left:785.00px;top:428.00px;font-size:15.2px;transform:scaleX(0.8348)">Adreas Schulz</div>
<div class="t" style="left:670.97px;top:465.00px;font-size:15.2px;transform:scaleX(0.7842)">Firma:</div>
<div class="t" style="left:777.41px;top:486.00px;font-size:15.2px;transform:scaleX(0.8418)">IBHsoftec GmbH</div>
</div></div>
<svg width="1024" height="6" viewBox="0 0 1024 6" style="position:absolute;left:0;top:0"><rect x="0" y="0" width="1024" height="4.7" fill="#000"/></svg>
</body></html>
